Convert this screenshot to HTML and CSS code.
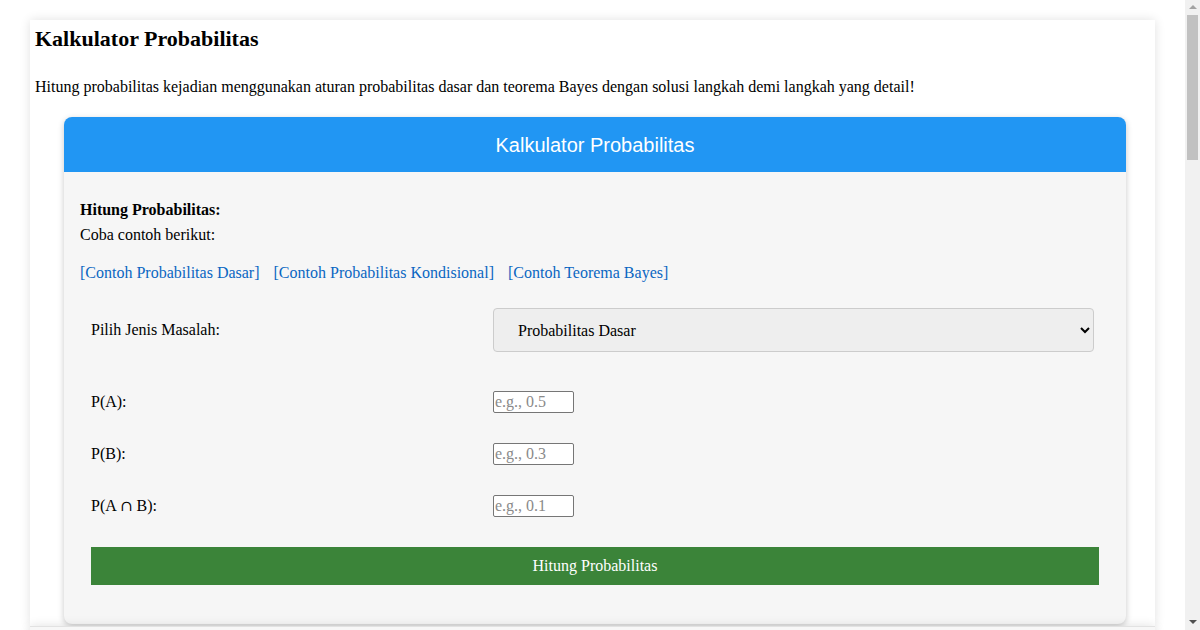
FILE: index.html
```html
<!DOCTYPE html>
<html lang="id">
<head>
<meta charset="utf-8">
<title>Kalkulator Probabilitas</title>
<link rel="stylesheet" href="styles.css">
</head>
<body>
<div class="container">
  <h2 class="title">Kalkulator Probabilitas</h2>
  <p class="intro">Hitung probabilitas kejadian menggunakan aturan probabilitas dasar dan teorema Bayes dengan solusi langkah demi langkah yang detail!</p>
  <div class="card">
    <div class="card-header">Kalkulator Probabilitas</div>
    <div class="card-body">
      <div class="lead"><b>Hitung Probabilitas:</b><br>Coba contoh berikut:</div>
      <div class="examples">
        <a href="#" class="ex-link">[Contoh Probabilitas Dasar]</a>
        <a href="#" class="ex-link">[Contoh Probabilitas Kondisional]</a>
        <a href="#" class="ex-link">[Contoh Teorema Bayes]</a>
      </div>
      <form class="form">
        <div class="row row-select">
          <label class="label">Pilih Jenis Masalah:</label>
          <div class="control">
            <select class="select">
              <option>Probabilitas Dasar</option>
              <option>Probabilitas Kondisional</option>
              <option>Teorema Bayes</option>
            </select>
          </div>
        </div>
        <div class="row">
          <label class="label">P(A):</label>
          <div class="control"><input class="num" type="text" placeholder="e.g., 0.5"></div>
        </div>
        <div class="row">
          <label class="label">P(B):</label>
          <div class="control"><input class="num" type="text" placeholder="e.g., 0.3"></div>
        </div>
        <div class="row">
          <label class="label">P(A <span class="cap">∩</span> B):</label>
          <div class="control"><input class="num" type="text" placeholder="e.g., 0.1"></div>
        </div>
        <button type="button" class="btn">Hitung Probabilitas</button>
      </form>
    </div>
  </div>
</div>
<div class="container next"></div>
<div class="scrollbar" aria-hidden="true">
  <div class="sb-arrow sb-up"></div>
  <div class="sb-thumb"></div>
  <div class="sb-arrow sb-down"></div>
</div>
</body>
</html>
```
FILE: styles.css
```css
html, body {
  background: #ffffff;
}
body {
  margin: 8px 23px 8px 8px;
  font-family: "Liberation Serif", "Times New Roman", serif;
  font-size: 16px;
  color: #000;
}
.scrollbar {
  position: fixed;
  top: 0;
  right: 0;
  width: 15px;
  height: 100vh;
  background: #f1f1f1;
  display: flex;
  flex-direction: column;
  align-items: center;
}
.sb-arrow {
  width: 0;
  height: 0;
  border-left: 4px solid transparent;
  border-right: 4px solid transparent;
}
.sb-up {
  margin-top: 5px;
  border-bottom: 4px solid #a3a3a3;
}
.sb-down {
  margin-top: auto;
  margin-bottom: 6px;
  border-top: 4px solid #505050;
}
.sb-thumb {
  width: 11px;
  height: 145px;
  margin-top: 6px;
  background: #c1c1c1;
}
.container {
  max-width: 1115px;
  margin: 12px auto 0;
  padding: 4px 5px 2px;
  background: #fff;
  box-shadow: 0 0 10px rgba(0, 0, 0, 0.12);
}
.container.next {
  margin-top: 0;
  height: 400px;
  background: #f7f7f7;
  border-top: 1px solid #e2e2e2;
}
.title {
  margin: 2px 0 0;
  font-size: 22px;
  font-weight: bold;
  line-height: normal;
}
.intro {
  margin: 26px 0 21px;
  line-height: normal;
}
.card {
  width: 1062px;
  margin-left: 29px;
  background: #f6f6f6;
  border-radius: 8px;
  box-shadow: 0 2px 6px rgba(0, 0, 0, 0.22);
  overflow: hidden;
}
.card-header {
  background: #2196f3;
  color: #fff;
  font-family: "Liberation Sans", Arial, sans-serif;
  font-size: 20px;
  text-align: center;
  height: 55px;
  line-height: 56px;
}
.card-body {
  padding: 25px 16px 39px;
}
.lead {
  line-height: 25px;
}
.examples {
  margin-top: 13px;
  display: flex;
  gap: 14px;
  line-height: 26px;
}
.ex-link {
  color: #0a66c2;
  text-decoration: none;
}
.form {
  margin-top: 22px;
  padding: 0 11px;
}
.row {
  display: flex;
  align-items: center;
  margin-bottom: 30px;
}
.row-select {
  margin-bottom: 39px;
}
.label {
  width: 402px;
  flex: none;
}
.cap {
  font-family: "DejaVu Serif", serif;
  font-size: 15px;
}
.control {
  flex: 1;
}
.select {
  width: 601px;
  height: 44px;
  padding: 0 20px;
  font-family: "Liberation Serif", "Times New Roman", serif;
  font-size: 16px;
  color: #000;
  background-color: #eeeeee;
  border: 1px solid #cccccc;
  border-radius: 4px;
}
.num {
  box-sizing: border-box;
  width: 81px;
  height: 22px;
  padding: 0 1px;
  font-family: "Liberation Serif", "Times New Roman", serif;
  font-size: 16px;
  border: 1px solid #767676;
  border-radius: 2px;
  background: #fff;
}
.num::placeholder {
  color: #8a8a8a;
}
.btn {
  display: block;
  width: 100%;
  height: 38px;
  border: none;
  background: #3b8439;
  color: #fff;
  font-family: "Liberation Serif", "Times New Roman", serif;
  font-size: 16px;
}
```
